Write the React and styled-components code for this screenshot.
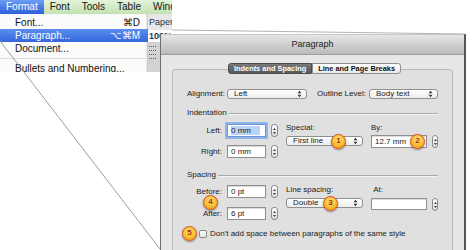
import styled, { createGlobalStyle } from 'styled-components';

const GlobalStyle = createGlobalStyle`
  body {
    margin: 0;
    font-family: "Liberation Sans", Arial, sans-serif;
  }
`;

const Page = styled.div`
  position: relative;
  width: 474px;
  height: 250px;
  overflow: hidden;
  background: #fff;
`;

/* ---------- cut-out of the word window with its Format menu ---------- */

const ScreenCut = styled.div`
  width: 172px;
  height: 72px;
  overflow: hidden;
  display: flex;
  flex-direction: column;
`;

const MenuBar = styled.div`
  display: flex;
  height: 14px;
  flex-shrink: 0;
  background: linear-gradient(#e4f4da, #c3e1b2);
  font-size: 10px;
  line-height: 14px;
  color: #151515;
  white-space: nowrap;
`;

const MenuTitle = styled.div`
  padding: 0 6px;
  background: ${(p) => (p.$active ? 'linear-gradient(#6d9ef5, #2c60d8)' : 'none')};
  color: ${(p) => (p.$active ? '#fff' : '#151515')};
`;

const MenuBody = styled.div`
  display: flex;
  flex: 1;
`;

const Dropdown = styled.div`
  width: 148px;
  padding-top: 2px;
  background: #fbfbfb;
  box-shadow: inset -2px 0 2px -1px rgba(0, 0, 0, 0.25);
`;

const MenuItem = styled.div`
  display: flex;
  justify-content: space-between;
  height: 13px;
  padding: 0 8px 0 15px;
  font-size: 10px;
  line-height: 13px;
  background: ${(p) => (p.$active ? 'linear-gradient(#5b8ef0, #3566dc)' : 'transparent')};
  color: ${(p) => (p.$active ? '#fff' : '#111')};
`;

const MenuSeparator = styled.div`
  height: 7px;
  display: flex;
  align-items: center;
  &::after {
    content: '';
    flex: 1;
    height: 1px;
    background: #dcdcdc;
  }
`;

const DocStrip = styled.div`
  width: 24px;
  display: flex;
  flex-direction: column;
  font-size: 9px;
`;

const DocRow = styled.div`
  height: ${(p) => p.$h}px;
  line-height: ${(p) => p.$h}px;
  padding-left: 1px;
  background: ${(p) => p.$bg};
  color: #2c3440;
  font-weight: ${(p) => (p.$bold ? 700 : 400)};
  overflow: hidden;
  white-space: nowrap;
`;

const DocTools = styled.div`
  flex: 1;
  background: #d3d3d3;
  display: flex;
  flex-direction: column;
  gap: 2px;
  padding: 4px 0 0 1px;
`;

const ToolLine = styled.div`
  width: 7px;
  height: 1px;
  border-top: 1px dotted #4a5a88;
`;

/* ---------- paragraph dialog ---------- */

const Dialog = styled.div`
  position: absolute;
  left: 160px;
  top: 34px;
  width: 306px;
  height: 230px;
  box-sizing: border-box;
  border-left: 1px solid #6f6f6f;
  border-right: 2px solid #555;
  background: #e7e7e7;
  display: flex;
  flex-direction: column;
  font-size: 8px;
  color: #1a1a1a;
`;

const TitleBar = styled.div`
  height: 21px;
  flex-shrink: 0;
  box-sizing: border-box;
  border-top: 1px solid #c8c8c8;
  border-bottom: 1px solid #9d9d9d;
  background: linear-gradient(#e6e6e6, #bababa);
  text-align: center;
  font-size: 9px;
  line-height: 19px;
  color: #222;
`;

const DialogBody = styled.div`
  flex: 1;
  padding: 8px 11px 0 11px;
  display: flex;
  flex-direction: column;
`;

const Tabs = styled.div`
  position: relative;
  z-index: 1;
  display: flex;
  justify-content: center;
  margin: 0 0 -5px 4px;
`;

const Tab = styled.div`
  height: 11px;
  box-sizing: border-box;
  padding: 0 5px;
  border: 1px solid ${(p) => (p.$active ? '#4c4c4c' : '#8e8e8e')};
  border-radius: ${(p) => (p.$first ? '3px 0 0 3px' : '0 3px 3px 0')};
  background: ${(p) => (p.$active ? 'linear-gradient(#7a7a7a, #5a5a5a)' : 'linear-gradient(#ffffff, #e8e8e8)')};
  color: ${(p) => (p.$active ? '#fff' : '#111')};
  font-size: 7.4px;
  font-weight: 700;
  line-height: 9px;
  white-space: nowrap;
`;

const GroupBox = styled.div`
  flex: 1;
  padding: 19px 14px 0 14px;
  border: 1px solid #b9b9b9;
  border-radius: 3px;
  background: #e0e0e0;
  display: flex;
  flex-direction: column;
`;

const Row = styled.div`
  display: flex;
  align-items: center;
  height: ${(p) => p.$h || 10}px;
  margin-top: ${(p) => p.$mt || 0}px;
  position: relative;
`;

const Label = styled.div`
  width: ${(p) => p.$w}px;
  margin-left: ${(p) => p.$ml || 0}px;
  flex-shrink: 0;
  text-align: ${(p) => (p.$right ? 'right' : 'left')};
  padding-right: ${(p) => (p.$right ? 5 : 0)}px;
  box-sizing: border-box;
  white-space: nowrap;
  line-height: 10px;
`;

const SectionHead = styled.div`
  display: flex;
  align-items: center;
  height: 10px;
  margin-top: ${(p) => p.$mt}px;
  white-space: nowrap;
  &::after {
    content: '';
    flex: 1;
    margin-left: 2px;
    margin-top: 3px;
    height: 1px;
    background: #a9a9a9;
    box-shadow: 0 1px 0 #f4f4f4;
  }
`;

const Block = styled.div`
  display: flex;
  align-items: flex-start;
  margin-top: ${(p) => p.$mt}px;
`;

const StackCol = styled.div`
  position: relative;
  display: flex;
  flex-direction: column;
  gap: ${(p) => p.$gap}px;
`;

const FieldCol = styled.div`
  display: flex;
  flex-direction: column;
  width: ${(p) => p.$w}px;
  margin-left: 8px;
  padding-top: ${(p) => p.$pt || 0}px;
`;

const ColLabel = styled.div`
  height: 8px;
  line-height: 8px;
  white-space: nowrap;
`;

const Popup = styled.div`
  position: relative;
  width: ${(p) => p.$w}px;
  height: 10px;
  margin-top: ${(p) => p.$mt || 0}px;
  box-sizing: border-box;
  flex-shrink: 0;
  display: flex;
  align-items: center;
  justify-content: space-between;
  padding: 0 4px 0 6px;
  border: 1px solid #8f8f8f;
  border-radius: 3px;
  background: linear-gradient(#ffffff, #ececec);
  line-height: 8px;
  white-space: nowrap;
`;

const Field = styled.div`
  position: relative;
  width: ${(p) => p.$w}px;
  height: ${(p) => p.$h || 13}px;
  margin-top: ${(p) => p.$mt || 0}px;
  box-sizing: border-box;
  flex-shrink: 0;
  padding-left: 3px;
  border: 1px solid ${(p) => (p.$focus ? '#6d94d0' : '#8f8f8f')};
  box-shadow: ${(p) => (p.$focus ? '0 0 0 2px #8fb5ea' : 'inset 0 1px 1px rgba(0,0,0,0.15)')};
  background: #fff;
  display: flex;
  align-items: center;
  white-space: nowrap;
`;

const Selected = styled.span`
  background: #b7d4fb;
  padding-right: 9px;
`;

const Stepper = styled.div`
  width: ${(p) => p.$w || 7}px;
  height: 13px;
  margin-left: 5px;
  box-sizing: border-box;
  flex-shrink: 0;
  border: 1px solid #8a8a8a;
  border-radius: 3px;
  background: linear-gradient(#ffffff, #dcdcdc);
  display: flex;
  align-items: center;
  justify-content: center;
`;

const InputWithStepper = styled.div`
  display: flex;
  align-items: flex-start;
  margin-top: ${(p) => p.$mt}px;
`;

const CheckRow = styled.div`
  position: relative;
  display: flex;
  align-items: center;
  height: 9px;
  margin-top: 9px;
  padding-left: 12px;
  white-space: nowrap;
`;

const CheckBox = styled.div`
  width: 8px;
  height: 8px;
  box-sizing: border-box;
  border: 1px solid #8a8a8a;
  border-radius: 2px;
  background: linear-gradient(#ffffff, #e4e4e4);
  margin-right: 3px;
`;

const Badge = styled.div`
  position: absolute;
  left: ${(p) => p.$x}px;
  top: ${(p) => p.$y}px;
  z-index: 2;
  width: 15px;
  height: 15px;
  box-sizing: border-box;
  border-radius: 50%;
  border: 1.5px solid #de4a17;
  background: radial-gradient(circle at 50% 35%, #ffe27a, #f7b92c 60%, #ee9218);
  box-shadow: 0 1px 2px rgba(0, 0, 0, 0.4);
  color: #9c3206;
  font-size: 8px;
  font-weight: 700;
  line-height: 12px;
  text-align: center;
`;

const CalloutLines = styled.svg`
  position: absolute;
  left: 0;
  top: 0;
  pointer-events: none;
`;

const PopupArrows = () => (
  <svg width="5" height="8" viewBox="0 0 5 8">
    <path d="M0.6 3.2 L2.5 0.8 L4.4 3.2Z M0.6 4.8 L2.5 7.2 L4.4 4.8Z" fill="#333" />
  </svg>
);

const StepArrows = () => (
  <svg width="3" height="8" viewBox="0 0 3 8">
    <path d="M0 3 L1.5 1 L3 3Z M0 5 L1.5 7 L3 5Z" fill="#444" />
  </svg>
);

const App = () => (
  <Page>
    <GlobalStyle />
    <ScreenCut>
      <MenuBar>
        <MenuTitle $active>Format</MenuTitle>
        <MenuTitle>Font</MenuTitle>
        <MenuTitle>Tools</MenuTitle>
        <MenuTitle>Table</MenuTitle>
        <MenuTitle>Window</MenuTitle>
      </MenuBar>
      <MenuBody>
        <Dropdown>
          <MenuItem>
            <span>Font...</span>
            <span>⌘D</span>
          </MenuItem>
          <MenuItem $active>
            <span>Paragraph...</span>
            <span>⌥⌘M</span>
          </MenuItem>
          <MenuItem>
            <span>Document...</span>
          </MenuItem>
          <MenuSeparator />
          <MenuItem>
            <span>Bullets and Numbering...</span>
          </MenuItem>
        </Dropdown>
        <DocStrip>
          <DocRow $h={16} $bg="#e5e7ea">Paper</DocRow>
          <DocRow $h={12} $bg="#fff" $bold>100%</DocRow>
          <DocTools>
            <ToolLine />
            <ToolLine />
            <ToolLine />
            <ToolLine />
          </DocTools>
        </DocStrip>
      </MenuBody>
    </ScreenCut>

    <Dialog>
      <TitleBar>Paragraph</TitleBar>
      <DialogBody>
        <Tabs>
          <Tab $active $first>Indents and Spacing</Tab>
          <Tab>Line and Page Breaks</Tab>
        </Tabs>
        <GroupBox>
          <Row>
            <Label $w={40}>Alignment:</Label>
            <Popup $w={80}>
              <span>Left</span>
              <PopupArrows />
            </Popup>
            <Label $w={52} $ml={10}>Outline Level:</Label>
            <Popup $w={69}>
              <span>Body text</span>
              <PopupArrows />
            </Popup>
          </Row>

          <SectionHead $mt={8}>Indentation</SectionHead>
          <Block $mt={7}>
            <StackCol $gap={8}>
              <Row $h={13}>
                <Label $w={40} $right>Left:</Label>
                <Field $w={39} $focus>
                  <Selected>0 mm</Selected>
                </Field>
                <Stepper>
                  <StepArrows />
                </Stepper>
              </Row>
              <Row $h={13}>
                <Label $w={40} $right>Right:</Label>
                <Field $w={39}>0 mm</Field>
                <Stepper>
                  <StepArrows />
                </Stepper>
              </Row>
            </StackCol>
            <FieldCol $w={77}>
              <ColLabel>Special:</ColLabel>
              <Popup $w={77} $mt={4}>
                <span>First line</span>
                <PopupArrows />
                <Badge $x={44} $y={-3}>1</Badge>
              </Popup>
            </FieldCol>
            <FieldCol $w={67}>
              <ColLabel>By:</ColLabel>
              <InputWithStepper $mt={3}>
                <Field $w={56}>
                  12.7 mm
                  <Badge $x={38} $y={-2}>2</Badge>
                </Field>
                <Stepper $w={6}>
                  <StepArrows />
                </Stepper>
              </InputWithStepper>
            </FieldCol>
          </Block>

          <SectionHead $mt={11}>Spacing</SectionHead>
          <Block $mt={6}>
            <StackCol $gap={9}>
              <Row $h={13}>
                <Label $w={40} $right>Before:</Label>
                <Field $w={39}>0 pt</Field>
                <Stepper>
                  <StepArrows />
                </Stepper>
              </Row>
              <Row $h={13}>
                <Label $w={40} $right>After:</Label>
                <Field $w={39}>6 pt</Field>
                <Stepper>
                  <StepArrows />
                </Stepper>
              </Row>
              <Badge $x={16} $y={10}>4</Badge>
            </StackCol>
            <FieldCol $w={77} $pt={1}>
              <ColLabel>Line spacing:</ColLabel>
              <Popup $w={77} $mt={4}>
                <span>Double</span>
                <PopupArrows />
                <Badge $x={36} $y={-3}>3</Badge>
              </Popup>
            </FieldCol>
            <FieldCol $w={67} $pt={1}>
              <ColLabel>&nbsp;At:</ColLabel>
              <InputWithStepper $mt={4}>
                <Field $w={56} $h={12} />
                <Stepper $w={6}>
                  <StepArrows />
                </Stepper>
              </InputWithStepper>
            </FieldCol>
          </Block>

          <CheckRow>
            <Badge $x={-5} $y={-3}>5</Badge>
            <CheckBox />
            <span>Don't add space between paragraphs of the same style</span>
          </CheckRow>
        </GroupBox>
      </DialogBody>
    </Dialog>

    <CalloutLines width="474" height="250">
      <line x1="0" y1="41" x2="160" y2="249" stroke="#9c9c9c" strokeWidth="1" />
      <line x1="172" y1="30" x2="465" y2="34" stroke="#b4b4b4" strokeWidth="1" />
    </CalloutLines>
  </Page>
);

export default App;
